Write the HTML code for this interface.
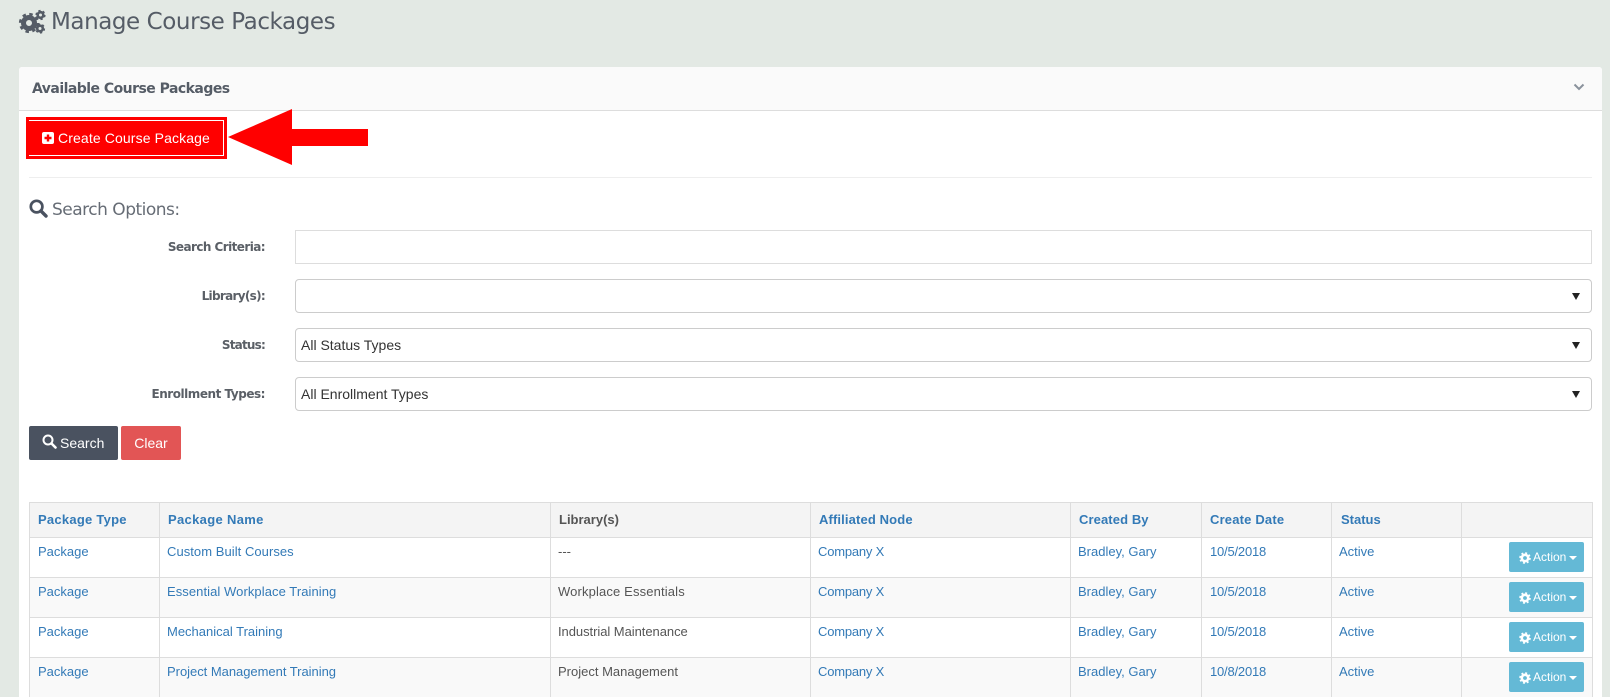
<!DOCTYPE html>
<html style="overflow:hidden;height:697px"><head><meta charset="utf-8"><style>
html,body{margin:0;padding:0}
body{width:1610px;height:697px;overflow:hidden;background:#e3e9e4;position:relative;font-family:"Liberation Sans",sans-serif;font-size:13px;color:#555}
.a{position:absolute;white-space:nowrap}
.os{font-family:"DejaVu Sans",sans-serif}
.lbl{right:1345px;font-weight:bold;font-size:12px;color:#5a5f66;font-family:"DejaVu Sans",sans-serif;line-height:18px}
.inp{left:295px;width:1297px;box-sizing:border-box;background:#fff;border:1px solid #ccc;border-radius:4px;font-size:14px;color:#333;padding-left:5px;line-height:32px}
.inp i{position:absolute;right:11px;top:13px;width:0;height:0;border:4px solid transparent;border-top:7px solid #222;border-bottom:0}
table{position:absolute;left:29px;top:502px;width:1563px;border-collapse:collapse;table-layout:fixed;background:#fff}
th,td{border:1px solid #ddd;padding:0;vertical-align:top;text-align:left;font-size:13px;line-height:18px;padding-left:8px;color:#555;white-space:nowrap;position:relative}
th{background:#f4f4f4;height:33px;line-height:34px;font-weight:bold;padding-left:8px}
td{height:39px;padding-top:5px;padding-bottom:0;box-sizing:border-box}
tr.e td{background:#f9f9f9}
tr{height:40px}
tr.h{height:34px}
tr.last{height:60px}
tr.last td{height:60px}
.b{color:#337ab7}
td.n{padding-left:7px}
td.c{padding-left:7px;letter-spacing:-.2px}
td.g{padding-left:7px}
td.d{letter-spacing:-.2px}
td.s{padding-left:7px}
.act{position:absolute;right:8px;top:4px;width:75px;height:30px;background:#64b9d6;border-radius:2px;color:#fff;font-size:12px;line-height:31px;text-align:left;letter-spacing:0}
.act svg{position:absolute;left:10px;top:10px}
.act span{position:absolute;left:24px}
.act i{position:absolute;left:60px;top:14px;width:0;height:0;border:4px solid transparent;border-top:4px solid #fff;border-bottom:0}
</style></head><body>
<svg class="a" style="left:18px;top:9px" width="30" height="28" viewBox="0 0 30 28">
<g fill="none" stroke="#555c66">
<circle cx="11" cy="14" r="5.500" stroke-width="5"/><circle cx="11" cy="14" r="8.900" stroke-width="2.400" stroke-dasharray="3.500 3.490"/>
<circle cx="22.500" cy="6" r="2.800" stroke-width="2.600"/><circle cx="22.500" cy="6" r="4.300" stroke-width="1.600" stroke-dasharray="2.200 2.300"/>
<circle cx="22" cy="19.500" r="2.800" stroke-width="2.600"/><circle cx="22" cy="19.500" r="4.300" stroke-width="1.600" stroke-dasharray="2.200 2.300"/>
</g></svg>
<div class="a os" style="left:51px;top:6px;font-size:23px;line-height:32px;color:#555c66;letter-spacing:-.43px">Manage Course Packages</div>

<div class="a" style="left:19px;top:67px;width:1583px;height:630px;background:#fff;border-radius:3px 3px 0 0"></div>
<div class="a" style="left:19px;top:67px;width:1583px;height:44px;box-sizing:border-box;background:#fafafa;border-bottom:1px solid #ddd;border-radius:3px 3px 0 0"></div>
<div class="a os" style="left:32px;top:79px;font-size:14px;font-weight:bold;line-height:20px;color:#555c66;letter-spacing:-.53px">Available Course Packages</div>
<svg class="a" style="left:1573px;top:83px" width="12" height="9" viewBox="0 0 12 9"><path d="M1.500 1.500L6 6l4.500-4.500" fill="none" stroke="#8a929c" stroke-width="2"/></svg>

<div class="a" style="left:26px;top:117px;width:201px;height:42px;background:#f00"></div>
<div class="a" style="left:29px;top:120px;width:195px;height:36px;box-sizing:border-box;border:1px solid #fff;border-left:0;background:#f00"></div>
<div class="a" style="left:29px;top:120px;width:1px;height:1px;background:#fff"></div>
<svg class="a" style="left:42px;top:132px" width="12" height="12" viewBox="0 0 12 12"><rect width="12" height="12" rx="2" fill="#fff"/><path d="M6 2.500v7M2.500 6h7" stroke="#f00" stroke-width="2.400"/></svg>
<div class="a" style="left:58px;top:128px;font-size:14px;line-height:20px;color:#fff;letter-spacing:.12px">Create Course Package</div>
<svg class="a" style="left:226px;top:107px" width="146" height="60" viewBox="0 0 146 60"><path d="M2 30L66 2V22H142V39H66V58Z" fill="#f00"/></svg>

<div class="a" style="left:29px;top:177px;width:1563px;height:1px;background:#eee"></div>
<svg class="a" style="left:29px;top:199px" width="19" height="19" viewBox="0 0 19 19"><circle cx="7.600" cy="7.600" r="5.800" fill="none" stroke="#4a5260" stroke-width="2.700"/><path d="M12 12l5 5" stroke="#4a5260" stroke-width="3.400" stroke-linecap="round"/></svg>
<div class="a os" style="left:52px;top:199px;font-size:17px;font-weight:normal;line-height:22px;color:#666c75;letter-spacing:-.5px">Search Options:</div>

<div class="a lbl" style="top:238px;letter-spacing:-.57px">Search Criteria:</div>
<div class="a lbl" style="top:287px;letter-spacing:-.69px">Library(s):</div>
<div class="a lbl" style="top:336px;letter-spacing:-.8px">Status:</div>
<div class="a lbl" style="top:385px;letter-spacing:-.47px">Enrollment Types:</div>

<div class="a inp" style="top:230px;height:34px;border-color:#ddd;border-radius:0;"></div>
<div class="a inp" style="top:279px;height:34px"><i></i></div>
<div class="a inp" style="top:328px;height:34px">All Status Types<i></i></div>
<div class="a inp" style="top:377px;height:34px">All Enrollment Types<i></i></div>

<div class="a" style="left:29px;top:426px;width:89px;height:34px;background:#4a5260;border-radius:2px"></div>
<svg class="a" style="left:42px;top:434px" width="15" height="15" viewBox="0 0 15 15"><circle cx="6" cy="6" r="4.500" fill="none" stroke="#fff" stroke-width="2"/><path d="M9.500 9.500l4 4" stroke="#fff" stroke-width="2.600" stroke-linecap="round"/></svg>
<div class="a" style="left:60px;top:433px;font-size:14px;line-height:20px;color:#fff">Search</div>
<div class="a" style="left:121px;top:426px;width:60px;height:34px;background:#e25555;border-radius:2px;color:#fff;font-size:14px;line-height:35px;text-align:center">Clear</div>

<table>
<colgroup><col style="width:130px"><col style="width:391px"><col style="width:260px"><col style="width:260px"><col style="width:131px"><col style="width:130px"><col style="width:130px"><col style="width:131px"></colgroup>
<tr class="h"><th class="b" style="letter-spacing:.25px">Package Type</th><th class="b" style="letter-spacing:.33px">Package Name</th><th>Library(s)</th><th class="b" style="letter-spacing:.13px">Affiliated Node</th><th class="b" style="letter-spacing:.1px">Created By</th><th class="b" style="letter-spacing:.18px">Create Date</th><th class="b" style="padding-left:9px">Status</th><th></th></tr>
<tr><td class="b">Package</td><td class="b n" style="letter-spacing:.05px">Custom Built Courses</td><td class="n">---</td><td class="b c">Company X</td><td class="b g">Bradley, Gary</td><td class="b d">10/5/2018</td><td class="b s">Active</td><td><div class="act"><svg width="12" height="12" viewBox="0 0 12 12"><circle cx="6" cy="6" r="3.200" fill="none" stroke="#fff" stroke-width="2.600"/><circle cx="6" cy="6" r="5" fill="none" stroke="#fff" stroke-width="1.600" stroke-dasharray="2 1.930"/></svg><span>Action</span><i></i></div></td></tr>
<tr class="e"><td class="b">Package</td><td class="b n" style="letter-spacing:.07px">Essential Workplace Training</td><td class="n" style="letter-spacing:.14px">Workplace Essentials</td><td class="b c">Company X</td><td class="b g">Bradley, Gary</td><td class="b d">10/5/2018</td><td class="b s">Active</td><td><div class="act"><svg width="12" height="12" viewBox="0 0 12 12"><circle cx="6" cy="6" r="3.200" fill="none" stroke="#fff" stroke-width="2.600"/><circle cx="6" cy="6" r="5" fill="none" stroke="#fff" stroke-width="1.600" stroke-dasharray="2 1.930"/></svg><span>Action</span><i></i></div></td></tr>
<tr><td class="b">Package</td><td class="b n">Mechanical Training</td><td class="n" style="letter-spacing:-.05px">Industrial Maintenance</td><td class="b c">Company X</td><td class="b g">Bradley, Gary</td><td class="b d">10/5/2018</td><td class="b s">Active</td><td><div class="act"><svg width="12" height="12" viewBox="0 0 12 12"><circle cx="6" cy="6" r="3.200" fill="none" stroke="#fff" stroke-width="2.600"/><circle cx="6" cy="6" r="5" fill="none" stroke="#fff" stroke-width="1.600" stroke-dasharray="2 1.930"/></svg><span>Action</span><i></i></div></td></tr>
<tr class="e last"><td class="b">Package</td><td class="b n" style="letter-spacing:-.03px">Project Management Training</td><td class="n">Project Management</td><td class="b c">Company X</td><td class="b g">Bradley, Gary</td><td class="b d">10/8/2018</td><td class="b s">Active</td><td><div class="act"><svg width="12" height="12" viewBox="0 0 12 12"><circle cx="6" cy="6" r="3.200" fill="none" stroke="#fff" stroke-width="2.600"/><circle cx="6" cy="6" r="5" fill="none" stroke="#fff" stroke-width="1.600" stroke-dasharray="2 1.930"/></svg><span>Action</span><i></i></div></td></tr>
</table>
</body></html>
